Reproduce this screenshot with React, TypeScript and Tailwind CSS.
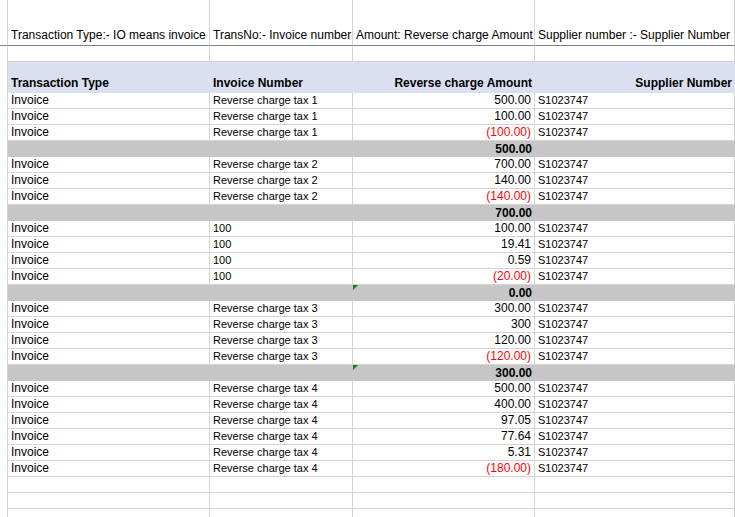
import React from "react";

type R = { k: "d"; a: string; b: string; c: string; neg?: boolean } | { k: "t"; c: string; tri?: boolean } | { k: "e" };
const d = (b: string, c: string, neg?: boolean): R => ({ k: "d", a: "Invoice", b, c, neg });
const rows: R[] = [
  d("Reverse charge tax 1", "500.00"), d("Reverse charge tax 1", "100.00"), d("Reverse charge tax 1", "(100.00)", true),
  { k: "t", c: "500.00" },
  d("Reverse charge tax 2", "700.00"), d("Reverse charge tax 2", "140.00"), d("Reverse charge tax 2", "(140.00)", true),
  { k: "t", c: "700.00" },
  d("100", "100.00"), d("100", "19.41"), d("100", "0.59"), d("100", "(20.00)", true),
  { k: "t", c: "0.00", tri: true },
  d("Reverse charge tax 3", "300.00"), d("Reverse charge tax 3", "300"), d("Reverse charge tax 3", "120.00"), d("Reverse charge tax 3", "(120.00)", true),
  { k: "t", c: "300.00", tri: true },
  d("Reverse charge tax 4", "500.00"), d("Reverse charge tax 4", "400.00"), d("Reverse charge tax 4", "97.05"), d("Reverse charge tax 4", "77.64"), d("Reverse charge tax 4", "5.31"), d("Reverse charge tax 4", "(180.00)", true),
  { k: "e" }, { k: "e" }, { k: "e" },
];

const cell = "border-r border-b border-[#d4d4d4] px-[3px] overflow-hidden whitespace-nowrap";

export default function App() {
  return (
    <div className="w-[735px] h-[517px] overflow-hidden bg-white text-[12px] text-black" style={{ fontFamily: '"Liberation Sans", Arial, sans-serif' }}>
      <div className="grid grid-cols-[8px_202px_143px_182px_200px]">
        {/* row 1 */}
        <div className="h-[46px] border-r border-[#d4d4d4] border-b border-b-[#808080]" />
        <div className={`${cell} h-[46px] flex items-end pb-[1px] border-b-[#808080]`}>Transaction Type:- IO means invoice</div>
        <div className={`${cell} h-[46px] flex items-end pb-[1px] border-b-[#808080]`}>TransNo:- Invoice number</div>
        <div className={`${cell} h-[46px] flex items-end pb-[1px] border-b-[#808080]`}>Amount: Reverse charge Amount</div>
        <div className={`${cell} h-[46px] flex items-end pb-[1px] border-b-[#808080]`}>Supplier number :- Supplier Number</div>
        {/* row 2 */}
        <div className="h-[16px] border-r border-[#d4d4d4]" />
        <div className={`${cell} h-[16px]`} /><div className={`${cell} h-[16px]`} /><div className={`${cell} h-[16px]`} /><div className={`${cell} h-[16px]`} />
        {/* header */}
        <div className="h-[31px] border-r border-[#d4d4d4]" />
        <div className="h-[31px] bg-[#dae0f0] px-[3px] flex items-end font-bold pb-[1px]">Transaction Type</div>
        <div className="h-[31px] bg-[#dae0f0] px-[3px] flex items-end font-bold pb-[1px]">Invoice Number</div>
        <div className="h-[31px] bg-[#dae0f0] px-[3px] flex items-end justify-end font-bold pb-[1px]">Reverse charge Amount</div>
        <div className="h-[31px] bg-[#dae0f0] px-[3px] flex items-end justify-end font-bold pb-[1px]">Supplier Number</div>
        {rows.map((r, i) =>
          r.k === "t" ? (
            <React.Fragment key={i}>
              <div className="h-[16px] border-r border-[#d4d4d4]" />
              <div className="h-[16px] bg-[#c6c6c6] col-span-2" />
              <div className="h-[16px] bg-[#c6c6c6] px-[3px] font-bold text-right leading-[16px] relative">
                {r.tri && <span className="absolute left-0 top-0 w-0 h-0 border-t-[5px] border-r-[5px] border-t-[#1a7a1a] border-r-transparent" />}
                {r.c}
              </div>
              <div className="h-[16px] bg-[#c6c6c6]" />
            </React.Fragment>
          ) : r.k === "e" ? (
            <React.Fragment key={i}>
              <div className="h-[16px] border-r border-[#d4d4d4]" />
              <div className={`${cell} h-[16px]`} /><div className={`${cell} h-[16px]`} /><div className={`${cell} h-[16px]`} /><div className={`${cell} h-[16px]`} />
            </React.Fragment>
          ) : (
            <React.Fragment key={i}>
              <div className="h-[16px] border-r border-[#d4d4d4]" />
              <div className={`${cell} h-[16px] leading-[15px]`}>{r.a}</div>
              <div className={`${cell} h-[16px] leading-[15px] text-[11px]`}>{r.b}</div>
              <div className={`${cell} h-[16px] leading-[15px] text-right ${r.neg ? "text-[#ff0000]" : ""}`}>{r.c}</div>
              <div className={`${cell} h-[16px] leading-[15px] text-[11px]`}>S1023747</div>
            </React.Fragment>
          )
        )}
      </div>
    </div>
  );
}
